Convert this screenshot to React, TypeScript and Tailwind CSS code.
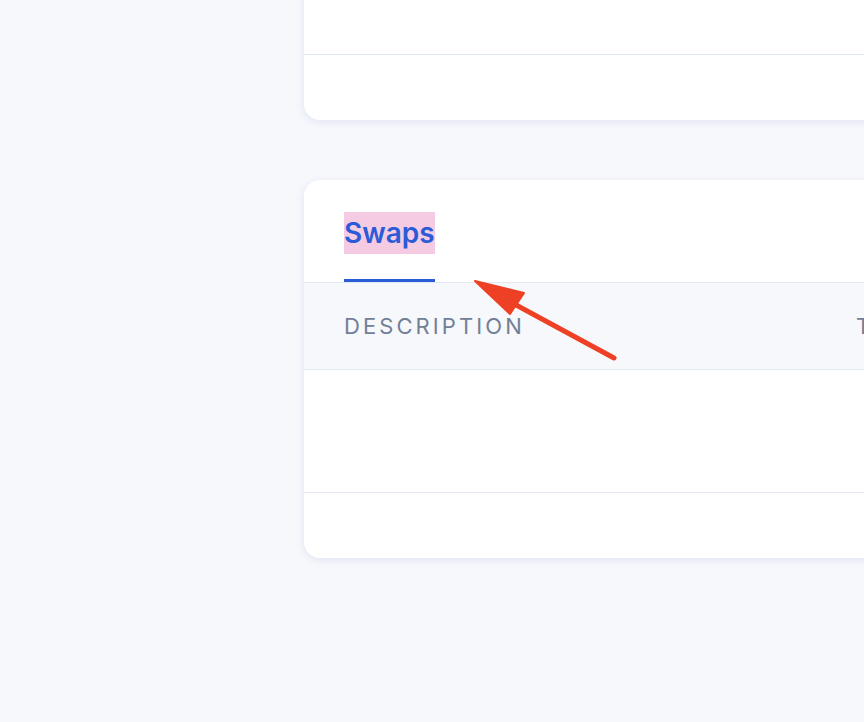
import React from "react"

export default function App() {
  return (
    <div className="relative w-[864px] h-[722px] overflow-hidden bg-[#f7f8fc] font-['Inter','Liberation_Sans',sans-serif]">
      <div className="flex">
        <aside className="w-[304px] shrink-0"></aside>
        <main className="w-[900px] shrink-0 flex flex-col gap-[60px]">
          <div className="-mt-[38px] bg-white rounded-2xl shadow-[0_2px_8px_rgba(112,128,190,0.16)]">
            <div className="h-[93px] border-b border-[#e2e8f0]"></div>
            <div className="h-[65px]"></div>
          </div>

          <div className="bg-white rounded-2xl shadow-[0_2px_8px_rgba(112,128,190,0.16)]">
            <div className="flex px-10 border-b border-[#e2e8f0]">
              <button className="pt-8 pb-[25px] border-b-[3px] border-[#2b5bd7]">
                <span className="block bg-[#f5cbe3] text-[#2b5bd7] text-[28px] leading-[42px] font-semibold">Swaps</span>
              </button>
            </div>
            <div className="flex h-[87px] items-center bg-[#f7f8fc] border-b border-[#e2e8f0] px-10 overflow-hidden">
              <div className="w-[512px] shrink-0 text-[22px] tracking-[0.14em] text-[#718096]">DESCRIPTION</div>
              <div className="shrink-0 text-[22px] tracking-[0.14em] text-[#718096]">TYPE</div>
            </div>
            <div className="h-[123px] border-b border-[#e2e8f0]"></div>
            <div className="h-[65px]"></div>
          </div>
        </main>
      </div>

      <svg className="absolute left-0 top-0 pointer-events-none" width="864" height="722">
        <line x1="614" y1="358" x2="505" y2="299" stroke="#ee4024" strokeWidth="5" strokeLinecap="round" />
        <polygon points="475,281 524,293 510,314" fill="#ee4024" stroke="#ee4024" strokeWidth="2" strokeLinejoin="round" />
      </svg>
    </div>
  )
}
